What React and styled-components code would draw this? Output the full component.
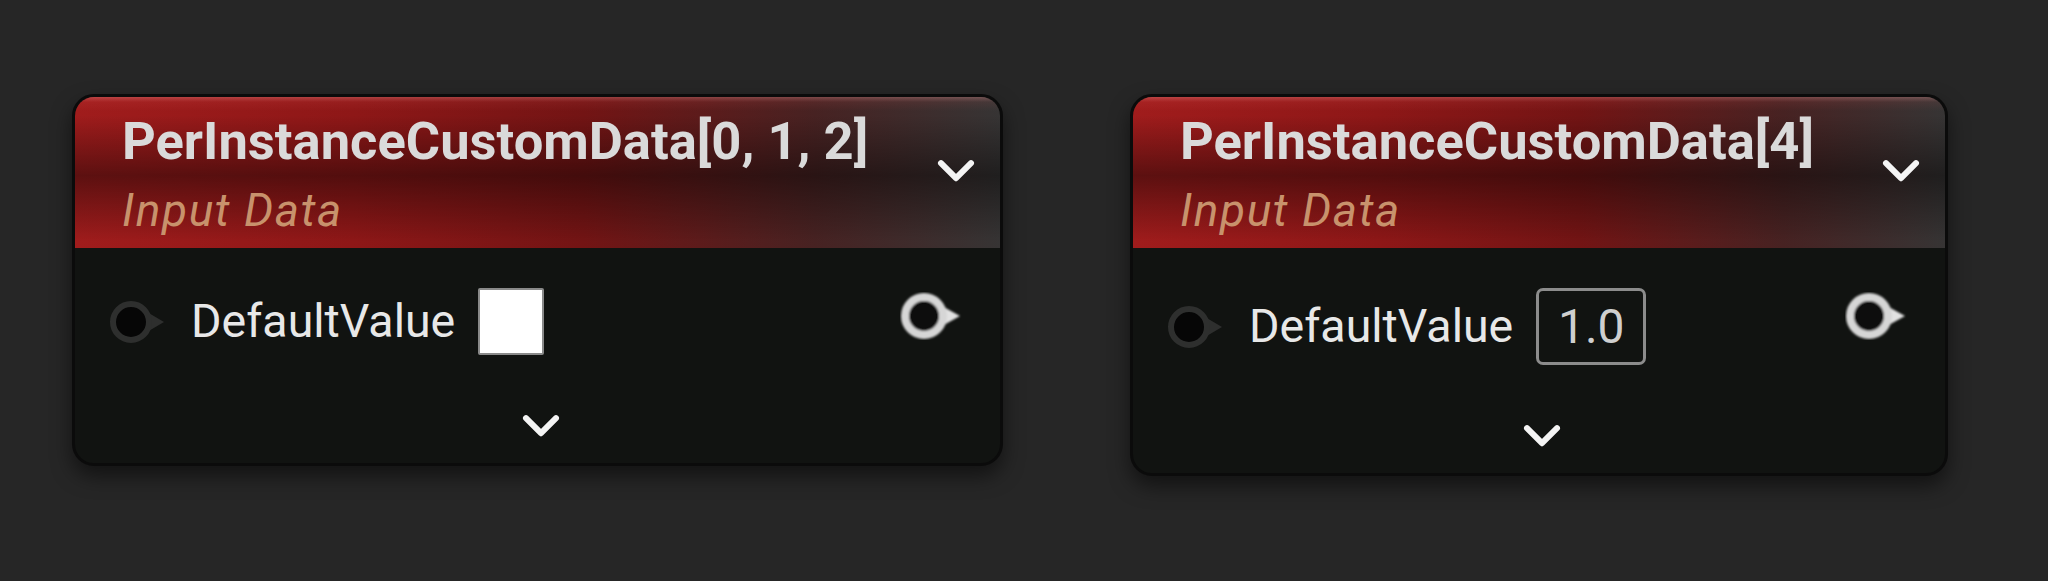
import React from 'react';
import styled, { createGlobalStyle } from 'styled-components';

const GlobalStyle = createGlobalStyle`
  html, body {
    margin: 0;
    padding: 0;
    background: #262626;
  }
  body {
    font-family: 'Roboto', 'Liberation Sans', sans-serif;
  }
`;

const Chevron = ({ size = 40 }) => (
  <svg width={size} height={size * 0.66} viewBox="0 0 40 26">
    <polyline
      points="5,5 20,20 35,5"
      fill="none"
      stroke="#f4f4f4"
      strokeWidth="6"
      strokeLinecap="round"
      strokeLinejoin="round"
    />
  </svg>
);

const InputPin = () => (
  <svg width="58" height="46" viewBox="0 0 58 46">
    <polygon points="38,13 55,23 38,33" fill="#2e2f2e" />
    <circle cx="22" cy="23" r="18" fill="#060606" stroke="#2e2f2e" strokeWidth="6" />
  </svg>
);

const OutputPin = () => (
  <svg width="62" height="48" viewBox="0 0 62 48">
    <defs>
      <filter id="soft" x="-20%" y="-20%" width="140%" height="140%">
        <feGaussianBlur stdDeviation="0.8" />
      </filter>
    </defs>
    <g filter="url(#soft)">
      <polygon points="42,14 60,24 42,34" fill="#e2e2e2" />
      <circle cx="24" cy="24" r="19" fill="#080808" stroke="#d6d6d6" strokeWidth="8" />
    </g>
  </svg>
);

const NodeCard = ({ width, title, subtitle, children }) => (
  <Node $width={width}>
    <Header>
      <TitleBlock>
        <Title>{title}</Title>
        <Subtitle>{subtitle}</Subtitle>
      </TitleBlock>
      <HeaderToggle>
        <Chevron />
      </HeaderToggle>
    </Header>
    <Body>
      <PinRow>
        <InputPin />
        <PinLabel>DefaultValue</PinLabel>
        {children}
        <Spacer />
        <OutputSlot>
          <OutputPin />
        </OutputSlot>
      </PinRow>
      <FooterToggle>
        <Chevron />
      </FooterToggle>
    </Body>
  </Node>
);

const App = () => (
  <>
    <GlobalStyle />
    <Canvas>
      <NodeCard width={931} title="PerInstanceCustomData[0, 1, 2]" subtitle="Input Data">
        <ColorSwatch />
      </NodeCard>
      <NodeCard width={818} title="PerInstanceCustomData[4]" subtitle="Input Data">
        <ValueBox>1.0</ValueBox>
      </NodeCard>
    </Canvas>
  </>
);

export default App;

const Canvas = styled.div`
  display: flex;
  align-items: flex-start;
  gap: 127px;
  min-height: 581px;
  box-sizing: border-box;
  padding: 94px 0 0 72px;
  background: #262626;
`;

const Node = styled.div`
  width: ${(p) => p.$width}px;
  box-sizing: border-box;
  border: 3px solid #0b0b0b;
  border-radius: 22px;
  overflow: hidden;
  background: #111311;
  box-shadow: 0 10px 20px rgba(0, 0, 0, 0.5);
`;

const Header = styled.div`
  display: flex;
  justify-content: space-between;
  align-items: center;
  height: 151px;
  box-sizing: border-box;
  padding: 14px 24px 12px 47px;
  background:
    linear-gradient(180deg, rgba(255, 160, 160, 0.3) 0px, rgba(255, 110, 110, 0.08) 5px, rgba(0, 0, 0, 0) 14px),
    linear-gradient(180deg, rgba(0, 0, 0, 0) 12%, rgba(0, 0, 0, 0.42) 52%, rgba(0, 0, 0, 0) 96%),
    linear-gradient(90deg, #a01c1c 0%, #8e1717 30%, #731414 55%, #472222 80%, #363434 100%);
`;

const TitleBlock = styled.div`
  display: flex;
  flex-direction: column;
  white-space: nowrap;
`;

const Title = styled.div`
  font-family: 'Roboto', sans-serif;
  font-weight: 700;
  font-size: 52.5px;
  line-height: 60px;
  color: #dadada;
`;

const Subtitle = styled.div`
  margin-top: 13px;
  font-family: 'Roboto', sans-serif;
  font-style: italic;
  font-size: 46px;
  letter-spacing: 1.6px;
  line-height: 52px;
  color: #c8926c;
`;

const HeaderToggle = styled.div`
  display: flex;
  margin-bottom: 4px;
`;

const Body = styled.div`
  display: flex;
  flex-direction: column;
  padding: 40px 38px 24px 34px;
`;

const PinRow = styled.div`
  display: flex;
  align-items: center;
`;

const PinLabel = styled.span`
  margin-left: 24px;
  margin-right: 23px;
  font-family: 'Roboto', sans-serif;
  font-size: 46.5px;
  line-height: 1;
  color: #e8e8e8;
`;

const ColorSwatch = styled.div`
  width: 66px;
  height: 67px;
  box-sizing: border-box;
  border: 2px solid #8a8a8a;
  border-radius: 2px;
  background: #ffffff;
`;

const ValueBox = styled.div`
  display: flex;
  align-items: center;
  justify-content: center;
  width: 110px;
  height: 77px;
  box-sizing: border-box;
  border: 3px solid #8c8c8c;
  border-radius: 7px;
  font-family: 'Roboto', sans-serif;
  font-size: 48px;
  color: #cfcfcf;
`;

const Spacer = styled.div`
  flex: 1;
`;

const OutputSlot = styled.div`
  display: flex;
  align-self: flex-start;
  margin-top: 4px;
`;

const FooterToggle = styled.div`
  display: flex;
  justify-content: center;
  margin-top: 58px;
  margin-left: 10px;
`;
